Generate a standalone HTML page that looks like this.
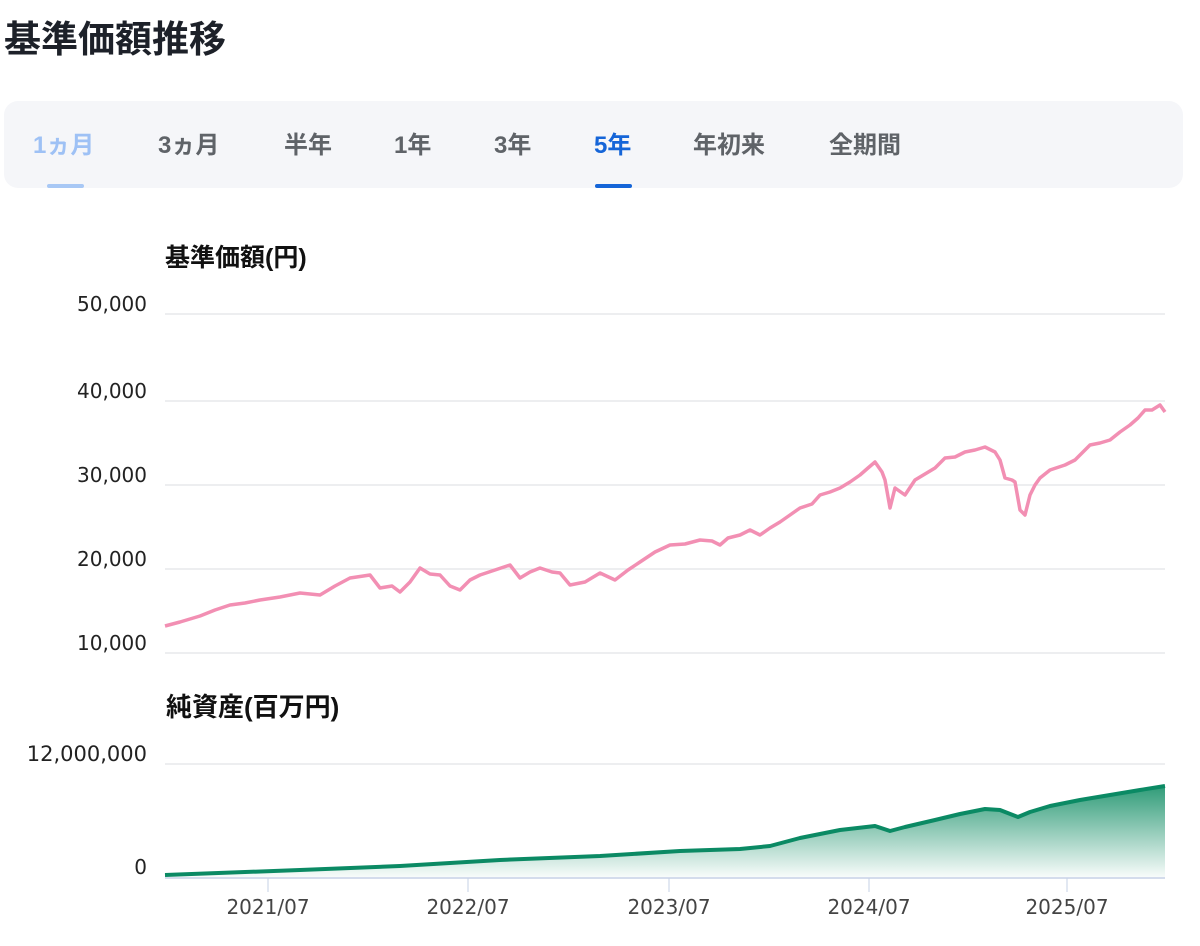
<!DOCTYPE html>
<html><head><meta charset="utf-8">
<style>
html,body{margin:0;padding:0;background:#fff;}
body{width:1200px;height:946px;position:relative;overflow:hidden;font-family:"Liberation Sans","Noto Sans CJK JP",sans-serif;}
h1{position:absolute;left:4px;top:12px;margin:0;font-size:37px;line-height:48px;font-weight:700;color:#1d2129;font-family:"Noto Sans CJK JP",sans-serif;}
.tabs{position:absolute;left:4px;top:101px;width:1179px;height:87px;background:#f5f6f9;border-radius:14px;}
.tab{position:absolute;top:131px;font-size:24px;line-height:30px;font-weight:700;color:#5f6368;font-family:"Liberation Sans","Noto Sans CJK JP",sans-serif;}
.ul{position:absolute;top:184px;height:4px;width:37px;border-radius:2px;}
</style></head><body>
<h1>基準価額推移</h1>
<div class="tabs"></div>
<div class="tab" style="left:33px;color:#9ec1f5">1ヵ月</div>
<div class="ul" style="left:47px;background:#a8c8f5"></div>
<div class="tab" style="left:158px">3ヵ月</div>
<div class="tab" style="left:284px">半年</div>
<div class="tab" style="left:394px">1年</div>
<div class="tab" style="left:494px">3年</div>
<div class="tab" style="left:594px;color:#1565d8">5年</div>
<div class="ul" style="left:595px;background:#1565d8"></div>
<div class="tab" style="left:693px">年初来</div>
<div class="tab" style="left:829px">全期間</div>

<svg width="1200" height="946" style="position:absolute;left:0;top:0" xmlns="http://www.w3.org/2000/svg">
<defs>
<linearGradient id="g" x1="0" y1="0" x2="0" y2="1">
<stop offset="0" stop-color="#0b8a60" stop-opacity="0.85"/>
<stop offset="1" stop-color="#0b8a60" stop-opacity="0.03"/>
</linearGradient>
</defs>
<g font-family="Liberation Sans, Noto Sans CJK JP, sans-serif" font-weight="700" fill="#111">
<text x="165" y="266" font-size="25">基準価額(円)</text>
<text x="166" y="716" font-size="26">純資産(百万円)</text>
</g>
<g stroke="#e2e4e8" stroke-width="1.2">
<line x1="165" y1="314" x2="1165" y2="314"/>
<line x1="165" y1="401" x2="1165" y2="401"/>
<line x1="165" y1="485" x2="1165" y2="485"/>
<line x1="165" y1="569" x2="1165" y2="569"/>
<line x1="165" y1="653" x2="1165" y2="653"/>
<line x1="165" y1="764" x2="1165" y2="764"/>
</g>
<g font-family="DejaVu Sans, sans-serif" font-size="20" fill="#222" text-anchor="end">
<text x="147" y="311">50,000</text>
<text x="147" y="398">40,000</text>
<text x="147" y="482">30,000</text>
<text x="147" y="566">20,000</text>
<text x="147" y="650">10,000</text>
<text x="147" y="761" font-size="21">12,000,000</text>
<text x="147" y="874">0</text>
</g>
<polyline fill="none" stroke="#f28fb3" stroke-width="3.5" stroke-linejoin="round" points="165,626 180,622 200,616 215,610 230,605 245,603 260,600 280,597 300,593 320,595 335,586 350,578 370,575 380,588 392,586 400,592 410,582 420,568 430,574 440,575 450,586 460,590 470,580 480,575 495,570 510,565 520,578 530,572 540,568 552,572 560,573 570,585 585,582 600,573 615,580 628,570 640,562 655,552 670,545 685,544 700,540 712,541 720,545 728,538 740,535 750,530 760,535 770,528 780,522 790,515 800,508 812,504 820,495 830,492 840,488 850,482 860,475 868,468 875,462 882,472 885,480 890,508 895,488 905,495 915,480 925,474 935,468 945,458 955,457 965,452 975,450 985,447 995,452 1000,460 1005,478 1012,480 1015,482 1020,510 1025,515 1030,495 1035,485 1040,478 1050,470 1065,465 1075,460 1080,455 1090,445 1100,443 1110,440 1120,432 1130,425 1138,418 1145,410 1152,410 1160,405 1165,412"/>
<polygon fill="url(#g)" points="165,877 165,875 300,870 400,866 500,860 600,856 680,851 740,849 770,846 800,838 840,830 875,826 890,831 905,827 935,820 960,814 985,809 1000,810 1018,817 1030,812 1050,806 1080,800 1110,795 1140,790 1165,786 1165,877"/>
<polyline fill="none" stroke="#0b8a64" stroke-width="4" stroke-linejoin="round" points="165,875 300,870 400,866 500,860 600,856 680,851 740,849 770,846 800,838 840,830 875,826 890,831 905,827 935,820 960,814 985,809 1000,810 1018,817 1030,812 1050,806 1080,800 1110,795 1140,790 1165,786"/>
<line x1="165" y1="878" x2="1165" y2="878" stroke="#c6d1e6" stroke-width="1.5"/>
<g stroke="#c6d1e6" stroke-width="1">
<line x1="268" y1="878" x2="268" y2="892"/>
<line x1="468" y1="878" x2="468" y2="892"/>
<line x1="669" y1="878" x2="669" y2="892"/>
<line x1="869" y1="878" x2="869" y2="892"/>
<line x1="1067" y1="878" x2="1067" y2="892"/>
</g>
<g font-family="DejaVu Sans, sans-serif" font-size="20" fill="#444" text-anchor="middle">
<text x="268" y="914">2021/07</text>
<text x="468" y="914">2022/07</text>
<text x="669" y="914">2023/07</text>
<text x="869" y="914">2024/07</text>
<text x="1067" y="914">2025/07</text>
</g>
</svg>
</body></html>
